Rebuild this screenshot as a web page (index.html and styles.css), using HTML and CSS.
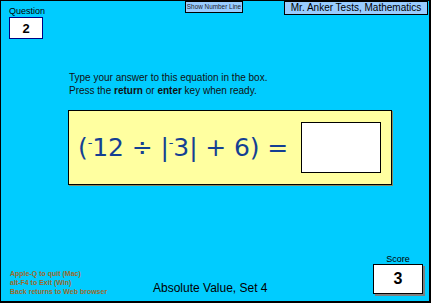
FILE: index.html
```html
<!DOCTYPE html>
<html>
<head>
<meta charset="utf-8">
<link rel="stylesheet" href="styles.css">
</head>
<body>
<div class="frame">
  <div class="top">
    <div class="q">
      <div class="q-label">Question</div>
      <div class="q-box">2</div>
    </div>
    <div class="btn">Show Number Line</div>
    <div class="title">Mr. Anker Tests, Mathematics</div>
  </div>
  <div class="instr">
    <div>Type your answer to this equation in the box.</div>
    <div>Press the <b>return</b> or <b>enter</b> key when ready.</div>
  </div>
  <div class="eqbox">
    <div class="eq">(<span class="neg">-</span>12 ÷ |<span class="neg">-</span>3| + 6) =</div>
    <div class="answer"></div>
  </div>
  <div class="bottom">
    <div class="keys">
      <div>Apple-Q to quit (Mac)</div>
      <div>alt-F4 to Exit (Win)</div>
      <div>Back returns to Web browser</div>
    </div>
    <div class="set">Absolute Value, Set 4</div>
    <div class="score">
      <div class="s-label">Score</div>
      <div class="s-box">3</div>
    </div>
  </div>
</div>
</body>
</html>
```
FILE: styles.css
```css
html, body {
  margin: 0;
  padding: 0;
  background: #ffffff;
}
.frame {
  width: 431px;
  height: 303px;
  box-sizing: border-box;
  border-style: solid;
  border-color: #000;
  border-width: 1px 2px 2px 1px;
  background: #00ccff;
  display: flex;
  flex-direction: column;
  font-family: "Liberation Sans", Arial, sans-serif;
  color: #000;
}
.top {
  display: flex;
  align-items: flex-start;
}
.q {
  margin-left: 8px;
  margin-top: 5px;
  width: 34px;
}
.q-label {
  font-size: 9px;
  line-height: 10px;
  height: 10px;
  white-space: nowrap;
}
.q-box {
  margin-top: 1px;
  width: 34px;
  height: 22px;
  box-sizing: border-box;
  border: 1px solid #000080;
  background: #fff;
  font-weight: bold;
  font-size: 13px;
  display: flex;
  align-items: center;
  justify-content: center;
}
.btn {
  margin-left: 142px;
  width: 58px;
  height: 12px;
  box-sizing: border-box;
  border: 1px solid #000;
  background: #99ccff;
  font-size: 6.4px;
  line-height: 10px;
  text-align: center;
  white-space: nowrap;
  overflow: hidden;
  color: #1a1a2a;
}
.title {
  margin-left: auto;
  margin-right: 1px;
  width: 144px;
  height: 14px;
  box-sizing: border-box;
  border: 1px solid #000;
  background: #99ccff;
  font-size: 10px;
  line-height: 12px;
  text-align: center;
  white-space: nowrap;
}
.instr {
  margin-top: 32px;
  margin-left: 68px;
  font-size: 10px;
  line-height: 13px;
  color: #111;
}
.eqbox {
  margin-top: 13px;
  margin-left: 67px;
  width: 324px;
  height: 75px;
  box-sizing: border-box;
  border: 1px solid #000;
  box-shadow: 1px 1px 0 #8a8a60;
  background: #ffffa0;
  display: flex;
  align-items: center;
  padding-left: 9px;
}
.eq {
  font-family: "DejaVu Sans", Verdana, sans-serif;
  font-size: 25px;
  color: #143f93;
  white-space: nowrap;
  letter-spacing: -0.1px;
}
.neg {
  font-size: 13px;
  vertical-align: 9px;
}
.answer {
  margin-left: auto;
  margin-right: 10px;
  width: 80px;
  height: 51px;
  box-sizing: border-box;
  border: 1px solid #000;
  background: #fff;
}
.bottom {
  margin-top: auto;
  padding-bottom: 5px;
  display: flex;
  align-items: flex-end;
}
.keys {
  margin-left: 9px;
  width: 143px;
  font-size: 7px;
  line-height: 9px;
  font-weight: bold;
  color: #9c6a2c;
  white-space: nowrap;
}
.set {
  font-size: 12px;
  line-height: 14px;
  margin-bottom: 1px;
  white-space: nowrap;
}
.score {
  margin-left: auto;
  margin-right: 6px;
  margin-bottom: 2px;
  width: 50px;
}
.s-label {
  font-size: 9px;
  line-height: 9px;
  text-align: center;
}
.s-box {
  width: 50px;
  height: 30px;
  box-sizing: border-box;
  border: 1px solid #000;
  box-shadow: 2px 2px 0 #7f7f7f;
  background: #fff;
  font-weight: bold;
  font-size: 16px;
  display: flex;
  align-items: center;
  justify-content: center;
}
```
